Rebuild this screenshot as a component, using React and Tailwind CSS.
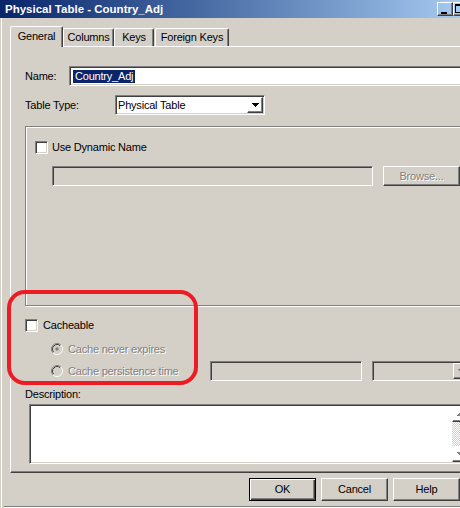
import React from "react";

const sunken =
  "border border-t-[#808080] border-l-[#808080] border-r-white border-b-white shadow-[inset_1px_1px_#404040,inset_-1px_-1px_#d4d0c8]";
const raised =
  "border border-t-white border-l-white border-r-[#404040] border-b-[#404040] shadow-[inset_-1px_-1px_#808080]";
const greyText = "text-[#808080] [text-shadow:1px_1px_0_#fff]";

function Check() {
  return <span className={`block w-[13px] h-[13px] bg-white shrink-0 ${sunken}`} />;
}

function Radio({ checked }) {
  return (
    <svg width="12" height="12" viewBox="0 0 12 12" className="shrink-0">
      <circle cx="6" cy="6" r="4.5" fill="#d4d0c8" />
      <path d="M2.11 9.89A5.5 5.5 0 0 1 9.89 2.11" fill="none" stroke="#808080" />
      <path d="M9.89 2.11A5.5 5.5 0 0 1 2.11 9.89" fill="none" stroke="#fff" />
      <path d="M2.82 9.18A4.5 4.5 0 0 1 9.18 2.82" fill="none" stroke="#404040" />
      <path d="M9.18 2.82A4.5 4.5 0 0 1 2.82 9.18" fill="none" stroke="#d4d0c8" />
      {checked && <circle cx="6" cy="6" r="1.7" fill="#808080" />}
    </svg>
  );
}

function Arrow({ up, color = "#000" }) {
  return (
    <svg width="7" height="4" viewBox="0 0 7 4" shapeRendering="crispEdges">
      <path d={up ? "M0 4h7L3.5 0z" : "M0 0h7L3.5 4z"} fill={color} />
    </svg>
  );
}

function ArrowBtn({ up, grey, h = "h-[16px]" }) {
  return (
    <div className={`w-[16px] ${h} shrink-0 flex items-center justify-center ${raised}`}>
      <Arrow up={up} color={grey ? "#808080" : "#000"} />
    </div>
  );
}

function Tab({ label, active, w }) {
  return (
    <div
      className={`${w} flex items-center justify-center rounded-t-[2px] border-t border-l border-t-white border-l-white border-r border-r-[#404040] shadow-[inset_-1px_0_#808080] ${
        active ? "relative z-10 h-[21px] -mb-px bg-[#d4d0c8] pb-[1px]" : "h-[18px]"
      }`}
    >
      {label}
    </div>
  );
}

function Button({ label, primary }) {
  return (
    <div
      className={`w-[75px] h-[23px] flex items-center justify-center ${
        primary
          ? "border border-black shadow-[inset_1px_1px_#fff,inset_-1px_-1px_#404040,inset_-2px_-2px_#808080]"
          : raised
      }`}
    >
      {label}
    </div>
  );
}

export default function App() {
  return (
    <div className="relative w-[460px] h-[508px] overflow-hidden bg-[#d4d0c8] font-['Liberation_Sans',Arial,sans-serif] text-[11px] leading-[13px] tracking-[-0.2px] text-black select-none">
      {/* title bar */}
      <div className="flex items-center h-[18px] pl-[5px] bg-linear-to-r from-[#0a246a] to-[#a6caf0]">
        <span className="text-white font-bold text-[11.5px] tracking-normal">
          Physical Table - Country_Adj
        </span>
        <div className="ml-auto mr-[-27px] flex shrink-0">
          <div className={`w-[16px] h-[14px] flex items-end pl-[3px] pb-[1px] ${raised}`}>
            <span className="block w-[6px] h-[2px] bg-black" />
          </div>
          <div className={`w-[16px] h-[14px] pl-[1px] pt-[1px] ${raised}`}>
            <span className="block w-[9px] h-[9px] border border-black border-t-2" />
          </div>
          <span className="w-[2px]" />
          <div className={`w-[16px] h-[14px] ${raised}`} />
        </div>
      </div>

      <div className="ml-[1px] border-l border-white pl-[8px] pt-[8px] h-[490px]">
        {/* tabs */}
        <div className="flex items-end h-[20px]">
          <Tab label="General" active w="w-[53px]" />
          <Tab label="Columns" w="w-[51px]" />
          <Tab label="Keys" w="w-[40px] mr-[1px]" />
          <Tab label="Foreign Keys" w="w-[74px]" />
        </div>

        {/* tab page */}
        <div
          className={`w-[470px] h-[427px] pl-[14px] flex flex-col border border-t-white border-l-white border-r-[#404040] border-b-[#404040] shadow-[inset_-1px_-1px_#808080]`}
        >
          <div className="mt-[19px] flex items-center h-[20px] shrink-0">
            <span className="w-[44px] shrink-0">Name:</span>
            <div className={`w-[420px] h-[20px] shrink-0 bg-white flex items-center pl-[3px] ${sunken}`}>
              <span className="bg-[#0a246a] text-white px-[2px]">Country_Adj</span>
            </div>
          </div>

          <div className="mt-[9px] flex items-center h-[20px] shrink-0">
            <span className="w-[90px] shrink-0">Table Type:</span>
            <div className={`w-[150px] h-[20px] shrink-0 bg-white flex items-center pl-[2px] ${sunken}`}>
              <span>Physical Table</span>
              <div className="ml-auto mr-px">
                <ArrowBtn />
              </div>
            </div>
          </div>

          {/* dynamic name group */}
          <div className="mt-[11px] w-[450px] h-[180px] shrink-0 pl-[9px] flex flex-col border border-[#808080] shadow-[inset_1px_1px_#fff,1px_1px_#fff]">
            <div className="mt-[14px] flex items-center h-[13px]">
              <Check />
              <span className="ml-[4px]">Use Dynamic Name</span>
            </div>
            <div className="mt-[12px] ml-[17px] flex gap-[10px]">
              <div className={`w-[321px] h-[20px] shrink-0 ${sunken}`} />
              <div className={`w-[77px] h-[20px] shrink-0 flex items-center justify-center ${raised}`}>
                <span className={greyText}>Browse...</span>
              </div>
            </div>
          </div>

          {/* cache */}
          <div className="mt-[13px] flex items-center h-[13px] shrink-0">
            <Check />
            <span className="ml-[5px]">Cacheable</span>
          </div>
          <div className="mt-[11px] ml-[26px] flex items-center h-[12px] shrink-0">
            <Radio checked />
            <span className={`ml-[5px] ${greyText}`}>Cache never expires</span>
          </div>
          <div className="mt-[6px] flex items-center h-[20px] shrink-0">
            <div className="ml-[26px] w-[159px] shrink-0 flex items-center">
              <Radio />
              <span className={`ml-[5px] ${greyText}`}>Cache persistence time</span>
            </div>
            <div className={`w-[152px] h-[20px] shrink-0 ${sunken}`} />
            <div className={`ml-[10px] w-[99px] h-[20px] shrink-0 flex items-center ${sunken}`}>
              <div className="ml-auto mr-px">
                <ArrowBtn grey />
              </div>
            </div>
          </div>

          <div className="mt-[7px] h-[13px] shrink-0">Description:</div>
          <div className={`mt-[3px] ml-[4px] w-[441px] h-[60px] shrink-0 bg-white flex justify-end p-px ${sunken}`}>
            <div className="w-[16px] flex flex-col">
              <ArrowBtn up grey />
              <div className="flex-1 bg-[image:repeating-conic-gradient(#d4d0c8_0_25%,#fff_0_50%)] bg-[length:2px_2px]" />
              <ArrowBtn grey />
            </div>
          </div>
        </div>

        {/* dialog buttons */}
        <div className="mt-[5px] ml-[239px] flex gap-[5px]">
          <Button label="OK" primary />
          <Button label="Cancel" />
          <Button label="Help" />
        </div>
        <div className="mt-[5px] -ml-[6px] w-[470px] h-px bg-[#808080]" />
        <div className="-ml-[6px] w-[470px] h-px bg-white" />
      </div>

      {/* red annotation */}
      <div className="absolute left-[7px] top-[290px] w-[191px] h-[95px] border-4 border-[#ed1c24] rounded-[18px] pointer-events-none" />
    </div>
  );
}
